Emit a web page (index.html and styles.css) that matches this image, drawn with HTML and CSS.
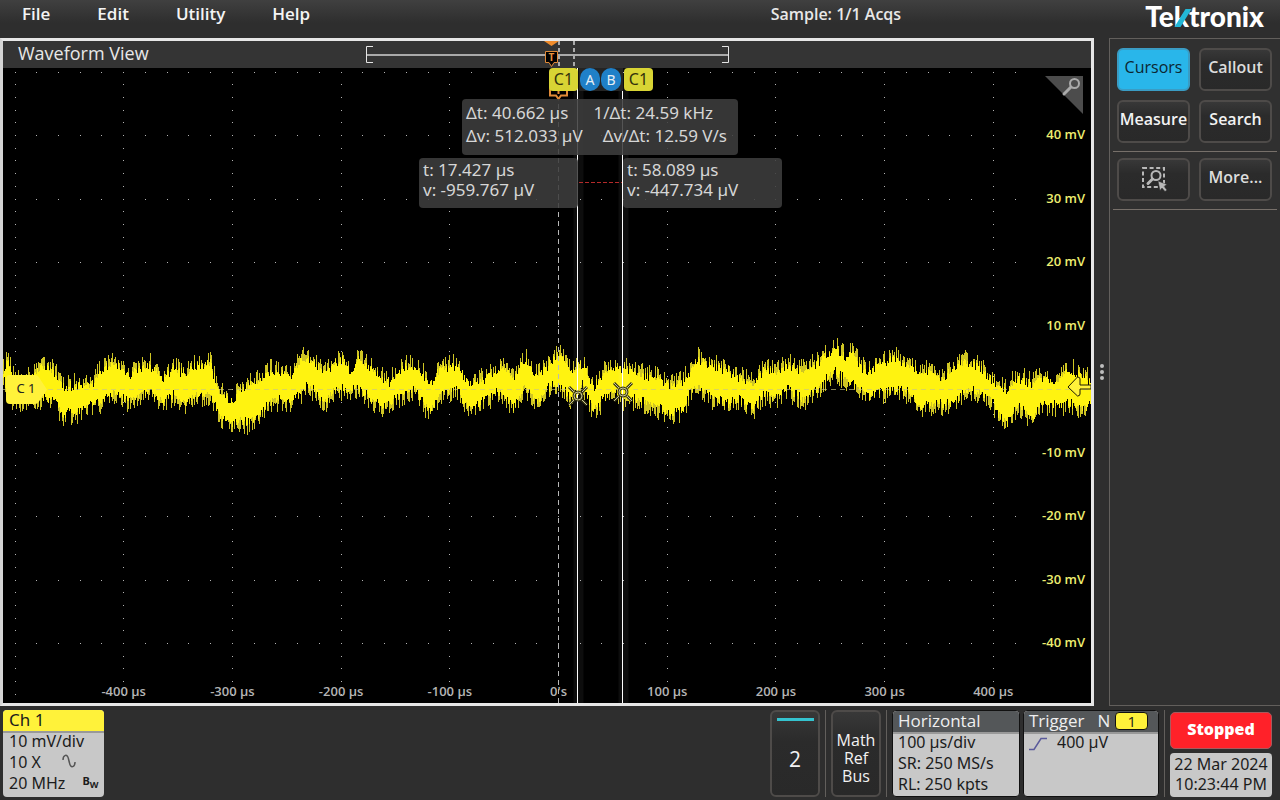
FILE: index.html
```html
<!DOCTYPE html>
<html lang="en">
<head>
<meta charset="utf-8">
<title>Tektronix Oscilloscope</title>
<link rel="stylesheet" href="styles.css">
</head>
<body>
<div class="app">
  <header class="topbar">
    <nav class="menu">
      <button type="button">File</button>
      <button type="button">Edit</button>
      <button type="button">Utility</button>
      <button type="button">Help</button>
    </nav>
    <p class="sample">Sample: 1/1 Acqs</p>
    <div class="logo">Tektronix
      <svg class="logo-slash" viewBox="0 0 18 20" aria-hidden="true"><path d="M11.500 2H17.500L6.500 20H0.500Z" fill="#22b8d6"/></svg>
    </div>
  </header>

  <div class="workspace">
    <main class="scope">
      <div class="scope-head">
        <h1>Waveform View</h1>
        <svg class="overview" viewBox="0 0 1088 27" preserveAspectRatio="none" aria-hidden="true">
          <path d="M364 14H725" stroke="#aaa" stroke-width="2"/>
          <path d="M370 5.500H363.500V21.500H370M719 5.500H725.500V21.500H719" fill="none" stroke="#e4e4e4" stroke-width="1"/>
          <path d="M556 0V27M571 0V27" stroke="#aaa" stroke-width="2" stroke-dasharray="4 3"/>
          <path d="M541 0H556L548.500 5Z" fill="#f08c2c"/>
          <path d="M542.500 10.500H554.500V21.500H551L548.500 25.500L546 21.500H542.500Z" fill="#000" stroke="#e08a38" stroke-width="1"/>
          <text class="trig-t" x="548.500" y="20" text-anchor="middle">T</text>
        </svg>
      </div>
      <div class="plot">
        <svg class="trace" id="trace" viewBox="0 0 1088 635" preserveAspectRatio="none" aria-label="Channel 1 waveform"></svg>

        <div class="y-axis" id="yAxis"></div>
        <div class="x-axis" id="xAxis"></div>

        <svg class="corner" viewBox="0 0 40 40" aria-hidden="true">
          <path d="M1 1H39V39Z" fill="#4c4c4c"/>
          <circle cx="30.500" cy="8.500" r="4.500" fill="none" stroke="#aaa" stroke-width="2"/>
          <path d="M27 12L20 19" stroke="#aaa" stroke-width="3" stroke-linecap="round"/>
        </svg>

        <div class="cursor-tags">
          <span class="tag">C1</span>
          <span class="pair"><b class="dot">A</b><b class="dot">B</b></span>
          <span class="tag">C1</span>
        </div>
        <div class="readout delta">
          <p><span>Δt: 40.662 µs</span><span>1/Δt: 24.59 kHz</span></p>
          <p><span>Δv: 512.033 µV</span><span>Δv/Δt: 12.59 V/s</span></p>
        </div>
        <div class="readout cursor-a"><p>t: 17.427 µs</p><p>v: -959.767 µV</p></div>
        <div class="readout cursor-b"><p>t: 58.089 µs</p><p>v: -447.734 µV</p></div>

        <svg class="channel-handle" viewBox="0 0 42 29" aria-hidden="true">
          <path d="M5 0H30Q33 0 35 4L42 14.500L35 25Q33 29 30 29H5Q1 29 1 25V4Q1 0 5 0Z" fill="#fff23a"/>
          <text class="channel-text" x="21" y="18" text-anchor="middle">C 1</text>
        </svg>
        <svg class="level-handle" viewBox="0 0 24 24" aria-hidden="true">
          <path d="M1 12L10.500 2Q13 2 13 4V10H24V14H13V19Q13 21 10.500 21Z" fill="#fff23a" stroke="#1c1a04"/>
        </svg>
      </div>
    </main>

    <div class="grip" aria-hidden="true"><i></i><i></i><i></i></div>

    <aside class="panel">
      <div class="panel-group">
        <button type="button" class="key active">Cursors</button>
        <button type="button" class="key dim">Callout</button>
        <button type="button" class="key">Measure</button>
        <button type="button" class="key">Search</button>
      </div>
      <div class="panel-group">
        <button type="button" class="key" aria-label="Zoom select">
          <svg class="key-icon" viewBox="0 0 28 28" aria-hidden="true">
            <rect x="3" y="3" width="21" height="19" fill="none" stroke="#b8b8b8" stroke-width="2" stroke-dasharray="4 2.600"/>
            <circle cx="16" cy="10.500" r="4.500" fill="#2c2c2c" stroke="#b8b8b8" stroke-width="2"/>
            <path d="M12.500 14L8 18.500" stroke="#b8b8b8" stroke-width="3" stroke-linecap="round"/>
            <path d="M18 16L27 19.500L24 21.500L27 25L25 26.500L22 23L20 25.500Z" fill="#b8b8b8" stroke="#2c2c2c" stroke-width="0.500"/>
          </svg>
        </button>
        <button type="button" class="key dim">More...</button>
      </div>
    </aside>
  </div>

  <footer class="dock">
    <section class="card channel">
      <h2>Ch 1</h2>
      <p>10 mV/div</p>
      <p>10 X <svg class="sine" viewBox="0 0 14 14" aria-hidden="true"><path d="M1 6C1 1 5.500 -1 6.500 5L7.500 9C8.500 15 13 13 13 8" fill="none" stroke="#555" stroke-width="1.500"/></svg></p>
      <p>20 MHz <span class="bw">B<sub>W</sub></span></p>
    </section>
    <div class="dock-right">
      <button type="button" class="key tall two"><span class="bar"></span>2</button>
      <i class="rule"></i>
      <button type="button" class="key tall math">Math<br>Ref<br>Bus</button>
      <i class="rule"></i>
      <div class="acquisition">
        <section class="card horizontal">
          <h2>Horizontal</h2>
          <p>100 µs/div</p>
          <p>SR: 250 MS/s</p>
          <p>RL: 250 kpts</p>
        </section>
        <section class="card trigger">
          <h2>Trigger <span class="mode">N</span><span class="source">1</span></h2>
          <p><svg class="edge" viewBox="0 0 18 14" aria-hidden="true"><path d="M0 12.500H5L12 1.500H18" fill="none" stroke="#5a5a9a" stroke-width="1.500"/></svg>400 µV</p>
        </section>
      </div>
      <i class="rule"></i>
      <div class="status">
        <button type="button" class="stopped">Stopped</button>
        <div class="clock"><p>22 Mar 2024</p><p>10:23:44 PM</p></div>
      </div>
    </div>
  </footer>
</div>
<script src="scope.js"></script>
</body>
</html>
```

FILE: styles.css
```css
* { box-sizing: border-box; }
body, h1, h2, p { margin: 0; }
body {
  background: #2e2e2e;
  color: #e8e8e8;
  font: 400 17px/20px "Noto Sans", "Open Sans", sans-serif;
}
button { font: inherit; color: inherit; cursor: pointer; }
.app { display: grid; grid-template-rows: 38px 1fr 94px; min-height: 100vh; }

.topbar {
  display: flex;
  align-items: flex-start;
  padding: 4px 16px 0 22px;
  background: linear-gradient(#404040, #2e2e2e 60%);
}
.menu { display: flex; flex: 1; gap: 47px; }
.menu button { padding: 0; border: 0; background: none; font-family: "Open Sans", sans-serif; font-weight: 600; line-height: 20px; color: #f4f4f4; }
.sample { margin-right: 244px; font: 600 16px/20px "Open Sans", sans-serif; }
.logo { position: relative; font: 900 28px/24px Lato, sans-serif; color: #fff; }
.logo-slash { position: absolute; left: 29px; top: 3px; width: 18px; height: 20px; }

.workspace { display: flex; min-height: 0; }
.scope { flex: 1; display: flex; flex-direction: column; border: 3px solid #e6e6e6; border-left-color: #d4d4d4; background: #000; }
.scope-head { display: grid; height: 27px; background: #343434; }
.scope-head h1 { grid-area: 1 / 1; padding: 2px 15px; font-family: "Open Sans", sans-serif; font-size: 18px; font-weight: 500; line-height: 20px; }
.overview { grid-area: 1 / 1; width: 100%; height: 27px; }
.trig-t { font: 700 10px "Open Sans", sans-serif; fill: #e8923c; }

.plot { position: relative; flex: 1; overflow: hidden; }
.trace { position: absolute; inset: 0; width: 100%; height: 100%; }
.y-label, .x-label { position: absolute; font: 600 13px/16px "Open Sans", sans-serif; white-space: nowrap; }
.y-label { right: 6px; color: #eeee70; transform: translateY(-50%); }
.x-label { bottom: 4px; color: #b4b4b4; transform: translateX(-50%); }
.corner { position: absolute; right: 7px; top: 7px; width: 40px; height: 40px; }

.cursor-tags { position: absolute; left: 546px; top: 0; display: flex; gap: 1px; height: 23px; }
.tag { width: 29px; border-radius: 4px; background: #d8d434; color: #33320c; font-size: 16px; line-height: 22px; text-align: center; }
.pair { display: flex; gap: 1px; padding-left: 1px; width: 44px; background: #242424; }
.dot { width: 20px; border-radius: 11px; background: #1f80c8; color: #e6eef5; font-weight: 400; font-size: 14px; line-height: 23px; text-align: center; }
.readout { position: absolute; padding: 2px 4px; border-radius: 4px; background: rgba(62, 62, 62, 0.88); color: #d6d6d6; white-space: nowrap; }
.delta { left: 459px; top: 31px; width: 276px; height: 56px; }
.delta p { display: flex; justify-content: space-between; line-height: 23px; }
.delta p:first-child { padding-right: 21px; }
.delta p:last-child { padding-right: 7px; }
.cursor-a { left: 416px; top: 90px; width: 159px; height: 50px; }
.cursor-b { left: 620px; top: 90px; width: 159px; height: 50px; }
.channel-handle { position: absolute; left: 2px; top: 48.4%; width: 42px; height: 29px; }
.channel-text { font: 400 13px "Noto Sans", sans-serif; fill: #222; }
.level-handle { position: absolute; right: 0; top: 48.4%; width: 24px; height: 24px; }

.grip { display: flex; flex-direction: column; align-items: center; justify-content: center; gap: 2px; width: 15px; }
.grip i { width: 4px; height: 4px; border-radius: 2px; background: #bdbdbd; }

.panel { width: 171px; border: 1px solid #625f5c; border-right: 0; background: #303030; }
.panel-group { display: grid; grid-template-columns: 1fr 1fr; gap: 9px; margin: 0 3px; padding: 6px 5px 8px 4px; border-bottom: 1px solid #77706a; }
.panel-group:first-child { padding-top: 9px; }
.key {
  height: 43px;
  padding: 0 0 5px;
  border: 2px solid #4e4b49;
  border-radius: 6px;
  background: linear-gradient(#383838, #2b2b2b 35%, #292929);
  font-family: "Open Sans", sans-serif;
  font-size: 16px;
  font-weight: 600;
  text-align: center;
  color: #f2f2f2;
}
.key.dim { color: #dcdcdc; }
.key.active { border-color: #3a9cc4; background: #29b6ea; color: #0c2631; font-weight: 500; }
.key-icon { display: block; width: 28px; height: 28px; margin: 3px auto 0; }

.dock { display: flex; justify-content: space-between; padding: 4px 8px 3px 3px; }
.dock-right { display: flex; gap: 4px; }
.acquisition { display: flex; gap: 3px; }
.card { border-radius: 4px; background: #c8c8c8; color: #1c1c1c; }
.card h2 { height: 21px; padding: 0 6px; border-radius: 4px 4px 0 0; box-shadow: 0 2px #999; font-size: 17px; font-weight: 400; line-height: 19px; }
.card p { padding: 0 6px; font-size: 16px; line-height: 21px; white-space: nowrap; }
.channel { width: 101px; }
.channel h2 { background: #fff23a; }
.sine { width: 14px; height: 14px; margin-left: 17px; }
.bw { margin-left: 13px; font-size: 11px; font-weight: 700; line-height: 12px; vertical-align: 4px; }
.bw sub { font-size: 9px; line-height: 9px; vertical-align: -3px; }
.horizontal { width: 128px; border: 1px solid #111; }
.trigger { width: 136px; border: 1px solid #111; }
.horizontal h2, .trigger h2 { padding: 0 5px; background: #545759; color: #efefef; font-family: "Open Sans", sans-serif; font-weight: 500; }
.horizontal p, .trigger p { padding: 0 5px; }
.trigger h2 { display: flex; }
.mode { margin-left: 13px; }
.source { width: 33px; height: 18px; margin: 1px 0 0 5px; border: 1px solid #111; border-radius: 4px; background: #fff23a; color: #1c1c1c; font-size: 15px; line-height: 16px; text-align: center; }
.edge { width: 18px; height: 14px; margin-right: 10px; vertical-align: -3px; }
.tall { height: 87px; width: 50px; }
.two { display: flex; flex-direction: column; align-items: center; gap: 24px; padding-top: 6px; font-size: 21px; font-weight: 400; line-height: 28px; }
.bar { width: 37px; height: 3px; background: #35c3cf; }
.math { padding-top: 14px; font-size: 16px; font-weight: 500; line-height: 18px; }
.rule { width: 1px; margin: 0 1px; background: #625f5c; }
.status { display: flex; flex-direction: column; gap: 4px; width: 102px; padding-top: 2px; }
.stopped { height: 37px; padding: 0 0 3px; border: 1px solid #a85a5e; border-radius: 5px; background: #ff2129; color: #fff; font: 800 16px/20px "Open Sans", sans-serif; }
.clock { flex: 1; padding-top: 1px; border-radius: 4px; background: #c8c8c8; color: #1c1c1c; font-size: 16px; line-height: 20px; text-align: center; white-space: nowrap; }
```

FILE: scope.js
```js
const NS = "http://www.w3.org/2000/svg";
const trace = document.getElementById("trace");
const X0 = 555.5, Y0 = 321.5, DX = 108.7, DY = 63.5;

function add(name, attrs) {
  const el = document.createElementNS(NS, name);
  for (const key in attrs) el.setAttribute(key, attrs[key]);
  trace.appendChild(el);
  return el;
}

// graticule dots
let dots = "";
const dot = (x, y) => { dots += `M${Math.floor(x)} ${Math.floor(y)}h1v1h-1z`; };
for (let r = -5; r <= 4; r++) {
  if (r === 0) continue;
  for (let c = -25; c <= 21; c++) dot(X0 + c * DX / 5, Y0 + r * DY);
}
for (let c = -5; c <= 4; c++) {
  if (c === 0) continue;
  for (let r = -25; r <= 24; r++) dot(X0 + c * DX, Y0 + r * DY / 5);
}
add("path", { d: dots, fill: "#b4b4b4" });

// [x, highest, lowest] points of the noise band
const band = [
  [0,297,318],[4,286,330],[12,307,340],[27,304,335],[40,292,337],[50,297,340],[60,312,353],[75,310,350],[87,312,343],[97,297,341],[104,292,333],[112,288,330],[124,302,340],[134,295,333],[146,290,330],[160,304,340],[170,294,333],[182,300,342],[190,292,333],[207,289,333],[215,317,352],[227,325,362],[237,317,358],[244,312,362],[255,308,353],[269,295,338],[287,300,340],[299,285,330],[304,285,324],[315,292,333],
  [320,298,342],[330,290,329],[339,284,327],[347,298,330],[354,284,325],[367,293,337],[379,305,343],[387,307,342],[399,293,332],[412,292,329],[420,300,342],[427,308,348],[439,293,330],[454,290,327],[460,300,340],[467,307,347],[477,307,342],[487,300,335],[497,292,330],[510,305,345],[521,284,325],[534,300,340],[547,288,325],[557,280,325],
  [569,298,338],[579,288,323],[590,312,348],[600,298,338],[609,295,328],[619,293,337],[634,300,338],[650,302,343],[667,312,353],[680,305,348],[687,298,330],[695,285,323],[707,292,335],[724,295,343],[734,302,337],[750,310,348],[760,295,333],[774,298,335],[784,290,328],[800,297,338],[814,288,327],[827,278,313],[832,273,310],[842,282,318],
  [849,278,322],[857,292,327],[865,297,337],[874,290,332],[892,282,330],[904,290,330],[917,298,345],[930,297,342],[937,305,343],[952,292,342],[962,288,328],[974,292,330],[987,303,337],[995,312,352],[1004,315,362],[1014,303,343],[1029,310,357],[1037,303,340],[1054,308,345],[1064,295,342],[1077,300,345],[1088,307,345]
];
let seed = 41;
const rnd = () => (seed = (seed * 16807) % 2147483647) / 2147483647;
let bright = "", dark = "", k = 0;
for (let x = 0; x < 1088; x++) {
  while (k < band.length - 2 && band[k + 1][0] <= x) k++;
  const [xa, ta, ba] = band[k], [xb, tb, bb] = band[k + 1];
  const f = (x - xa) / (xb - xa);
  const top = ta + (tb - ta) * f, bottom = ba + (bb - ba) * f;
  const hi = Math.round(top + rnd() * 18 - 6), lo = Math.round(bottom - rnd() * 18 + 6);
  dark += `M${x} ${hi}h1V${lo}h-1z`;
  const upper = Math.max(hi, Math.round(top + 2 + rnd() * 7));
  const lower = Math.min(lo, Math.round(bottom - 2 - rnd() * 7));
  bright += `M${x} ${upper}h1V${lower}h-1z`;
}
add("path", { d: dark, fill: "#cfc524" });
add("path", { d: bright, fill: "#fff310" });
add("path", { d: "M0 321.5H1088", stroke: "#c9c485", "stroke-opacity": 0.65, "stroke-dasharray": "5 4" });

// trigger marker and time-zero line
add("path", { d: "M555.500 0V635", stroke: "#b8b8b8", "stroke-dasharray": "5 4" });
add("path", { d: "M547 6V27.5H553L555.500 31L558 27.5H564V6", fill: "#000", stroke: "#e08a38", "stroke-width": 2 });
add("path", { d: "M555.500 22V26", stroke: "#e08a38", "stroke-width": 2 });

// cursor lines and their crosshairs
for (const x of [574.5, 619.5]) {
  add("path", { d: `M${x + 1} 0V635`, stroke: "#fff", "stroke-opacity": 0.05, "stroke-width": 10 });
  add("path", { d: `M${x} 0V635`, stroke: "#fff" });
}
add("path", { d: "M576 114.500H619", stroke: "#b52a2a", "stroke-dasharray": "4 2" });
for (const [x, y] of [[575, 328], [620, 324]]) {
  const d = `M${x - 9} ${y - 9}l5 5M${x + 9} ${y - 9}l-5 5M${x - 9} ${y + 9}l5 -5M${x + 9} ${y + 9}l-5 -5`;
  for (const [stroke, width] of [["#3a3814", 3], ["#c9c795", 1]]) {
    add("path", { d, stroke, "stroke-width": width });
    add("circle", { cx: x, cy: y, r: 4, fill: "none", stroke, "stroke-width": width });
  }
}

// axis labels
function label(parent, cls, side, percent, text) {
  const el = document.createElement("span");
  el.className = cls;
  el.style[side] = percent + "%";
  el.textContent = text;
  document.getElementById(parent).appendChild(el);
}
for (const n of [4, 3, 2, 1, -1, -2, -3, -4]) label("yAxis", "y-label", "top", (Y0 - n * DY - 1.4) / 6.35, n * 10 + " mV");
for (const n of [-4, -3, -2, -1, 0, 1, 2, 3, 4]) label("xAxis", "x-label", "left", (X0 + n * DX) / 10.88, n ? n * 100 + " µs" : "0's");
```
